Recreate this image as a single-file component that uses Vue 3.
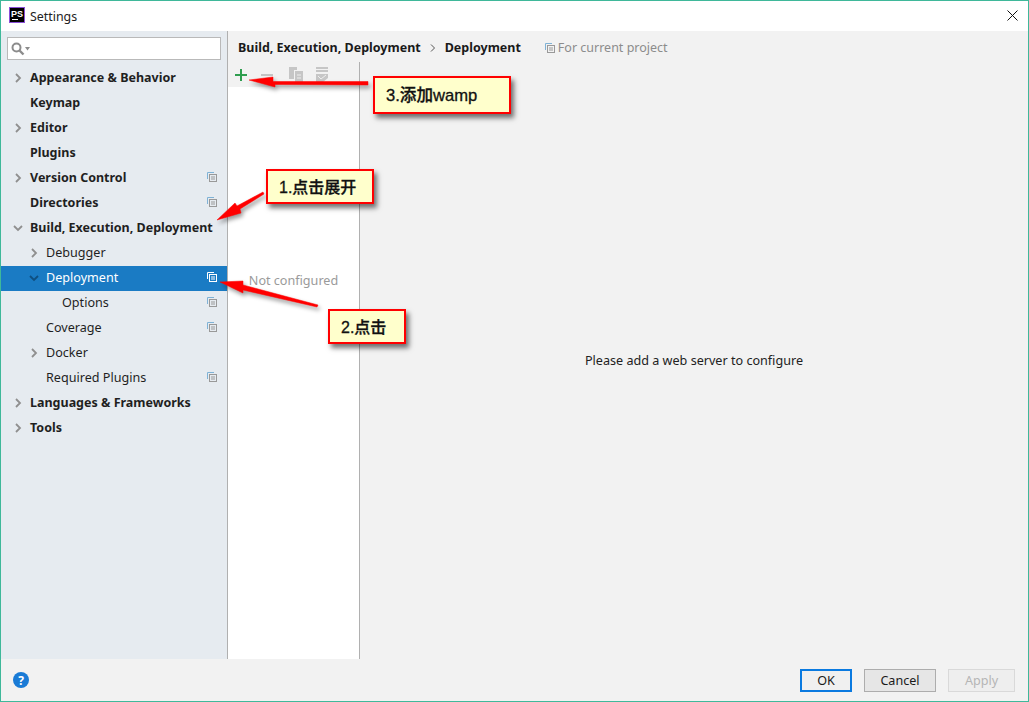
<template>
  <div class="window">
    <div class="titlebar">
      <svg class="logo" width="16" height="16" viewBox="0 0 16 16">
        <rect x="0.5" y="0.5" width="15" height="15" fill="#000" stroke="#8a4fd8" />
        <text x="2" y="9.5" class="logo-text">PS</text>
        <rect x="3" y="12" width="6" height="1" fill="#fff" />
      </svg>
      <span class="title">Settings</span>
      <svg class="close" width="11" height="11" viewBox="0 0 11 11">
        <path d="M0.5 0.5 L10.5 10.5 M10.5 0.5 L0.5 10.5" stroke="#111" stroke-width="1" fill="none" />
      </svg>
    </div>

    <div class="body">
      <aside class="sidebar">
        <div class="search">
          <svg width="20" height="14" viewBox="0 0 20 14">
            <circle cx="5.5" cy="5.5" r="4" fill="none" stroke="#8c8c8c" stroke-width="2" />
            <path d="M8.5 8.5 L12.5 12.5" stroke="#8c8c8c" stroke-width="2.4" />
            <path d="M14 5 H19 L16.5 8.5 Z" fill="#8c8c8c" />
          </svg>
        </div>
        <div class="tree">
          <div
            v-for="row in rows"
            :key="row.label"
            class="row"
            :class="{ bold: row.bold, selected: row.selected, ['lv' + row.level]: true }"
          >
            <span class="arrow">
              <svg v-if="row.arrow" width="10" height="10" viewBox="0 0 10 10">
                <path
                  :d="row.arrow === 'open' ? 'M1 3 L5 7 L9 3' : 'M3 1 L7 5 L3 9'"
                  fill="none"
                  :stroke="row.selected ? '#0f4f80' : '#8f8f8f'"
                  stroke-width="1.8"
                />
              </svg>
            </span>
            <span class="label">{{ row.label }}</span>
            <svg v-if="row.copy" class="copy" width="10" height="10" viewBox="0 0 10 10">
              <path d="M0.5 7 V0.5 H7" fill="none" :stroke="row.selected ? '#fff' : '#7fb2d6'" />
              <rect x="2.5" y="2.5" width="7" height="7" fill="none" :stroke="row.selected ? '#fff' : '#999'" />
              <path d="M4 5 H8 M4 7 H8" :stroke="row.selected ? '#fff' : '#999'" />
            </svg>
          </div>
        </div>
      </aside>

      <main class="content">
        <div class="crumbs">
          <span class="crumb">Build, Execution, Deployment</span>
          <svg class="sep" width="6" height="8" viewBox="0 0 6 8">
            <path d="M1 0.5 L4.5 4 L1 7.5" fill="none" stroke="#555" />
          </svg>
          <span class="crumb">Deployment</span>
          <svg class="project-icon" width="10" height="10" viewBox="0 0 10 10">
            <path d="M0.5 7 V0.5 H7" fill="none" stroke="#7fb2d6" />
            <rect x="2.5" y="2.5" width="7" height="7" fill="none" stroke="#999" />
            <path d="M4 5 H8 M4 7 H8" stroke="#999" />
          </svg>
          <span class="project">For current project</span>
        </div>

        <div class="panes">
          <div class="servers">
            <div class="toolbar">
              <svg width="12" height="12" viewBox="0 0 12 12">
                <path d="M6 0 V12 M0 6 H12" stroke="#2f9e4f" stroke-width="2" />
              </svg>
              <svg class="tool-minus" width="12" height="12" viewBox="0 0 12 12">
                <path d="M0 6 H12" stroke="#c4c4c4" stroke-width="2" />
              </svg>
              <svg class="tool-copy" width="14" height="15" viewBox="0 0 14 15">
                <path d="M0 0 H8 V3 H5 V12 H0 Z" fill="#c6c6c6" />
                <rect x="6" y="4" width="8" height="11" fill="#c6c6c6" />
                <path d="M8 8 H12 M8 11 H12" stroke="#eee" />
              </svg>
              <svg class="tool-export" width="14" height="15" viewBox="0 0 14 15">
                <path d="M1 1 H13 M1 4 H13" stroke="#c6c6c6" stroke-width="2" />
                <path d="M1 7 H13 V11 L8 15 H1 Z" fill="#c6c6c6" />
                <path d="M3 9 L6 12 L11 8" stroke="#eee" fill="none" />
              </svg>
            </div>
            <div class="server-list">Not configured</div>
          </div>
          <div class="detail">Please add a web server to configure</div>
        </div>
      </main>
    </div>

    <div class="footer">
      <span class="help">?</span>
      <div class="buttons">
        <button class="btn primary">OK</button>
        <button class="btn">Cancel</button>
        <button class="btn disabled">Apply</button>
      </div>
    </div>

    <!-- annotations drawn over the screenshot -->
    <svg class="arrows" width="1029" height="702" viewBox="0 0 1029 702">
      <path v-for="a in arrows" :key="a" :d="a" fill="#f00" stroke="#f00" stroke-width="0.5" />
    </svg>
    <div v-for="c in callouts" :key="c.text" class="callout" :class="c.cls">{{ c.text }}</div>
  </div>
</template>

<script setup>
const rows = [
  { label: 'Appearance & Behavior', bold: true, level: 0, arrow: 'closed' },
  { label: 'Keymap', bold: true, level: 0 },
  { label: 'Editor', bold: true, level: 0, arrow: 'closed' },
  { label: 'Plugins', bold: true, level: 0 },
  { label: 'Version Control', bold: true, level: 0, arrow: 'closed', copy: true },
  { label: 'Directories', bold: true, level: 0, copy: true },
  { label: 'Build, Execution, Deployment', bold: true, level: 0, arrow: 'open' },
  { label: 'Debugger', level: 1, arrow: 'closed' },
  { label: 'Deployment', level: 1, arrow: 'open', copy: true, selected: true },
  { label: 'Options', level: 2, copy: true },
  { label: 'Coverage', level: 1, copy: true },
  { label: 'Docker', level: 1, arrow: 'closed' },
  { label: 'Required Plugins', level: 1, copy: true },
  { label: 'Languages & Frameworks', bold: true, level: 0, arrow: 'closed' },
  { label: 'Tools', bold: true, level: 0, arrow: 'closed' },
];

// tail -> head polygons
const arrows = [
  'M263 192 L264 194 L240 209 L241 213 L217 220 L235 203 L237 206 Z',
  'M318 305 L317 307 L243 290 L243 293 L220 282 L243 281 L243 285 Z',
  'M368 81.5 L368 85 L275 84.5 L275 87 L249 80 L273 77 L273 81.5 Z',
];

const callouts = [
  { text: '1.点击展开', cls: 'c1' },
  { text: '2.点击', cls: 'c2' },
  { text: '3.添加wamp', cls: 'c3' },
];
</script>

<style>
html,
body {
  margin: 0;
  background: #fff;
}
</style>

<style scoped>
.window {
  position: relative;
  width: 1029px;
  height: 702px;
  box-sizing: border-box;
  border: 1px solid #3fb89a;
  display: flex;
  flex-direction: column;
  overflow: hidden;
  background: #f2f2f2;
  font-family: "Noto Sans", "Open Sans", sans-serif;
  font-size: 12.6px;
  color: #1a1a1a;
}

.titlebar {
  height: 30px;
  background: #fff;
  display: flex;
  align-items: center;
  padding-left: 8px;
  flex: none;
}

.logo {
  margin-top: -2px;
}

.logo-text {
  font-family: "Liberation Sans", sans-serif;
  font-size: 9px;
  font-weight: bold;
  fill: #fff;
}

.title {
  margin-left: 5px;
  font-size: 12.4px;
  color: #222;
}

.close {
  margin-left: auto;
  margin-right: 10px;
  margin-top: -2px;
}

.body {
  flex: 1;
  display: flex;
  min-height: 0;
}

.sidebar {
  width: 226px;
  flex: none;
  background: #e6ebf0;
  border-right: 1px solid #b0b0b0;
  padding-top: 6px;
}

.search {
  height: 21px;
  margin: 0 6px;
  background: #fff;
  border: 1px solid #b9b9b9;
  display: flex;
  align-items: center;
  padding-left: 3px;
}

.tree {
  margin-top: 6px;
}

.row {
  height: 25px;
  box-sizing: border-box;
  padding-bottom: 2px;
  display: flex;
  align-items: center;
  position: relative;
  color: #1f1f1f;
}

.row.bold {
  font-weight: 700;
  font-size: 12.5px;
}

.row.selected {
  background: #1a7bc4;
  color: #fff;
}

.arrow {
  width: 10px;
  height: 10px;
  display: flex;
  flex: none;
}

.lv0 .arrow {
  margin-left: 12px;
  margin-right: 7px;
}

.lv1 .arrow {
  margin-left: 28px;
  margin-right: 7px;
}

.lv2 .arrow {
  margin-left: 44px;
  margin-right: 7px;
}

.copy {
  position: absolute;
  right: 10px;
  top: 6px;
}

.content {
  flex: 1;
  display: flex;
  flex-direction: column;
  min-width: 0;
}

.crumbs {
  height: 31px;
  box-sizing: border-box;
  padding: 2px 0 0 10px;
  display: flex;
  align-items: center;
  font-weight: 700;
  font-size: 12.5px;
  flex: none;
}

.sep {
  margin: 0 9px;
}

.project-icon {
  margin-left: 24px;
  margin-right: 3px;
}

.project {
  font-weight: 400;
  color: #8c8c8c;
}

.panes {
  flex: 1;
  display: flex;
  min-height: 0;
}

.servers {
  width: 131px;
  flex: none;
  border-right: 1px solid #b0b0b0;
  display: flex;
  flex-direction: column;
}

.toolbar {
  height: 25px;
  display: flex;
  align-items: center;
  padding-left: 7px;
  flex: none;
}

.tool-minus {
  margin-left: 14px;
}

.tool-copy {
  margin-left: 16px;
}

.tool-export {
  margin-left: 12px;
}

.server-list {
  flex: 1;
  background: #fff;
  display: flex;
  align-items: center;
  justify-content: center;
  padding-bottom: 186px;
  box-sizing: border-box;
  color: #9a9a9a;
}

.detail {
  flex: 1;
  display: flex;
  align-items: center;
  justify-content: center;
  color: #222;
}

.footer {
  height: 42px;
  flex: none;
  display: flex;
  align-items: center;
  padding: 0 13px 0 12px;
}

.help {
  width: 16px;
  height: 16px;
  border-radius: 50%;
  background: #1a7bd6;
  color: #fff;
  font-weight: 700;
  font-size: 12px;
  display: flex;
  align-items: center;
  justify-content: center;
}

.buttons {
  margin-left: auto;
  display: flex;
  gap: 12px;
}

.btn {
  width: 72px;
  height: 23px;
  padding: 0;
  box-sizing: border-box;
  background: #e6e6e6;
  border: 1px solid #adadad;
  font-family: inherit;
  font-size: 12.6px;
  color: #1a1a1a;
}

.btn.primary {
  width: 52px;
  border: 2px solid #0a7ae0;
  background: #f0f0f0;
}

.btn.disabled {
  width: 67px;
  background: #eeeeee;
  border-color: #d9d9d9;
  color: #b5b5b5;
}

.arrows {
  position: absolute;
  left: -1px;
  top: -1px;
  pointer-events: none;
  filter: drop-shadow(2px 3px 2px rgba(0, 0, 0, 0.4));
}

.callout {
  position: absolute;
  box-sizing: border-box;
  background: #ffffcc;
  border: 2px solid #f00;
  box-shadow: 3px 4px 5px rgba(0, 0, 0, 0.55);
  padding-bottom: 2px;
  font-family: "Liberation Sans", "Noto Sans CJK SC", sans-serif;
  font-size: 16px;
  font-weight: 500;
  color: #111;
  -webkit-text-stroke: 0.3px #111;
  display: flex;
  align-items: center;
}

.c1 {
  left: 265px;
  top: 168px;
  width: 108px;
  height: 35px;
  padding-left: 11px;
}

.c2 {
  left: 327px;
  top: 308px;
  width: 78px;
  height: 35px;
  padding-left: 11px;
}

.c3 {
  left: 372px;
  top: 75px;
  width: 138px;
  height: 38px;
  padding-left: 11px;
  padding-bottom: 3px;
  font-size: 16.6px;
}
</style>
